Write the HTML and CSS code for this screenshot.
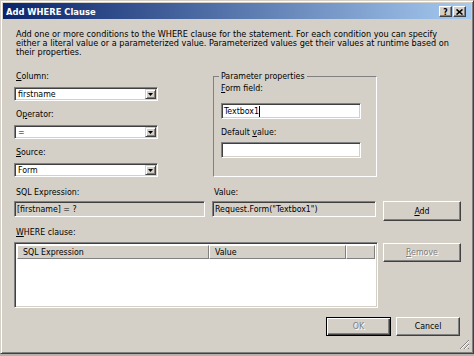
FILE: index.html
```html
<!DOCTYPE html>
<html>
<head>
<meta charset="utf-8">
<link rel="stylesheet" href="styles.css">
</head>
<body>
<div class="window">
  <div class="titlebar">
    <span class="title">Add WHERE Clause</span>
    <div class="caption-buttons">
      <span class="cap-btn help">?</span>
      <span class="cap-btn close"><svg width="7" height="6" viewBox="0 0 7 6"><path d="M0.5 0.5 L6.5 5.5 M6.5 0.5 L0.5 5.5" stroke="#000" stroke-width="1.6" fill="none"/></svg></span>
    </div>
  </div>
  <div class="content">
    <p class="desc">Add one or more conditions to the WHERE clause for the statement. For each condition you can specify either a literal value or a parameterized value. Parameterized values get their values at runtime based on their properties.</p>
    <div class="main">
      <div class="left">
        <label class="lbl"><u>C</u>olumn:</label>
        <div class="combo"><span class="combo-text">firstname</span><span class="combo-btn"><svg width="5" height="3" viewBox="0 0 5 3"><path d="M0 0 H5 L2.5 3 Z" fill="#000"/></svg></span></div>
        <label class="lbl gap"><span>O</span><u>p</u>erator:</label>
        <div class="combo"><span class="combo-text">=</span><span class="combo-btn"><svg width="5" height="3" viewBox="0 0 5 3"><path d="M0 0 H5 L2.5 3 Z" fill="#000"/></svg></span></div>
        <label class="lbl gap"><u>S</u>ource:</label>
        <div class="combo"><span class="combo-text">Form</span><span class="combo-btn"><svg width="5" height="3" viewBox="0 0 5 3"><path d="M0 0 H5 L2.5 3 Z" fill="#000"/></svg></span></div>
      </div>
      <fieldset class="group">
        <legend>Parameter properties</legend>
        <label class="lbl"><u>F</u>orm field:</label>
        <div class="textbox first">Textbox1<span class="caret"></span></div>
        <label class="lbl gap2">Default <u>v</u>alue:</label>
        <div class="textbox second"></div>
      </fieldset>
    </div>
    <div class="expr">
      <label class="lbl">SQL Expression:</label>
      <label class="lbl">Value:</label>
      <span></span>
      <div class="field">[firstname] = ?</div>
      <div class="field">Request.Form("Textbox1")</div>
      <button class="btn"><u>A</u>dd</button>
    </div>
    <label class="lbl where-lbl"><u>W</u>HERE clause:</label>
    <div class="where">
      <div class="listview">
        <div class="lv-header">
          <span class="lv-col c1">SQL Expression</span>
          <span class="lv-col c2">Value</span>
          <span class="lv-col c3"></span>
        </div>
      </div>
      <button class="btn remove" disabled><u>R</u>emove</button>
    </div>
    <div class="footer">
      <button class="btn ok" disabled>OK</button>
      <button class="btn">Cancel</button>
    </div>
  </div>
  <svg class="grip" width="11" height="11" viewBox="0 0 11 11">
    <path d="M10 1 L1 10 M10 5 L5 10 M10 9 L9 10" stroke="#808080" stroke-width="1" fill="none"/>
    <path d="M10 2 L2 10 M10 6 L6 10" stroke="#fff" stroke-width="1" fill="none"/>
  </svg>
</div>
</body>
</html>
```
FILE: styles.css
```css
body {
  margin: 0;
  background: #b5b2aa;
  font-family: "DejaVu Sans Condensed", "DejaVu Sans", sans-serif;
  font-stretch: condensed;
  font-size: 8.75px;
  line-height: 9px;
  color: #000;
}

.window {
  position: relative;
  width: 474px;
  height: 354px;
  box-sizing: border-box;
  border: 1px solid;
  border-color: #d4d0c8 #404040 #404040 #d4d0c8;
  box-shadow: inset 1px 1px #fff, inset -1px -1px #808080;
  padding: 2px;
  background: #d4d0c8;
  display: flex;
  flex-direction: column;
}

.titlebar {
  height: 16px;
  flex: none;
  background: linear-gradient(90deg, #0a246a, #a6caf0);
  display: flex;
  align-items: center;
  justify-content: space-between;
  padding: 0 5px 0 3px;
}

.title {
  color: #fff;
  font-weight: bold;
  font-size: 9.3px;
}

.caption-buttons {
  display: flex;
  gap: 1px;
  padding-top: 1px;
}

.cap-btn {
  width: 13px;
  height: 11px;
  box-sizing: border-box;
  background: #d4d0c8;
  border: 1px solid;
  border-color: #fff #404040 #404040 #fff;
  box-shadow: inset -1px -1px #808080;
  display: flex;
  align-items: center;
  justify-content: center;
  font-weight: bold;
  font-size: 8.5px;
  line-height: 8px;
}

.content {
  flex: 1;
  padding: 0 10px 0 11px;
  display: flex;
  flex-direction: column;
}

.desc {
  margin: 11px 0 0 2px;
  width: 434px;
  font-size: 9.05px;
}

.lbl {
  display: block;
  height: 9px;
  padding-left: 2px;
  white-space: nowrap;
}

.main {
  display: grid;
  grid-template-columns: 144px 164px;
  column-gap: 55px;
  margin-top: 15px;
}

.left {
  display: flex;
  flex-direction: column;
}

.left .lbl.gap {
  margin-top: 9px;
}

.combo {
  margin-top: 6px;
  height: 14px;
  box-sizing: border-box;
  background: #fff;
  border: 1px solid;
  border-color: #808080 #fff #fff #808080;
  box-shadow: inset 1px 1px #404040, inset -1px -1px #d4d0c8;
  padding: 2px;
  display: flex;
  align-items: center;
  justify-content: space-between;
}

.combo-text {
  padding-left: 1px;
}

.combo-btn {
  width: 11px;
  height: 10px;
  margin: -1px -1px -1px 0;
  box-sizing: border-box;
  background: #d4d0c8;
  border: 1px solid;
  border-color: #d4d0c8 #404040 #404040 #d4d0c8;
  box-shadow: inset 1px 1px #fff, inset -1px -1px #808080;
  display: flex;
  align-items: center;
  justify-content: center;
}

.group {
  margin: 0;
  height: 105px;
  box-sizing: border-box;
  padding: 3px 7px 0 7px;
  border: 1px solid #808080;
  border-right-color: #fff;
  border-bottom-color: #fff;
  min-width: 0;
}

.group legend {
  padding: 0 2px;
  margin-left: -2px;
  line-height: 9px;
}

.group .lbl {
  padding-left: 0;
}

.group .lbl.gap2 {
  margin-top: 9px;
}

.textbox {
  width: 140px;
  height: 16px;
  box-sizing: border-box;
  background: #fff;
  border: 1px solid;
  border-color: #808080 #fff #fff #808080;
  box-shadow: inset 1px 1px #404040, inset -1px -1px #d4d0c8;
  padding: 3px 2px 0 2px;
  display: flex;
  align-items: flex-start;
}

.textbox.first {
  margin-top: 10px;
}

.textbox.second {
  margin-top: 5px;
}

.caret {
  display: inline-block;
  width: 1px;
  height: 11px;
  margin-top: -1px;
  background: #000;
}

.expr {
  display: grid;
  grid-template-columns: 191px 164px 78px;
  column-gap: 7px;
  row-gap: 4px;
  margin-top: 11px;
  align-items: start;
}

.field {
  height: 16px;
  box-sizing: border-box;
  border: 1px solid;
  border-color: #808080 #fff #fff #808080;
  box-shadow: inset 1px 1px #404040, inset -1px -1px #d4d0c8;
  padding: 3px 2px 0 2px;
  white-space: nowrap;
  overflow: hidden;
}

.btn {
  font: inherit;
  font-stretch: condensed;
  color: #000;
  height: 20px;
  padding: 0;
  box-sizing: border-box;
  background: #d4d0c8;
  border: 1px solid;
  border-color: #fff #404040 #404040 #fff;
  box-shadow: inset -1px -1px #808080;
  text-align: center;
}

.btn:disabled {
  color: #808080;
  text-shadow: 1px 1px #fff;
}

.where-lbl {
  margin-top: 7px;
}

.where {
  display: grid;
  grid-template-columns: 364px 78px;
  column-gap: 5px;
  margin-top: 5px;
  align-items: start;
}

.listview {
  height: 66px;
  box-sizing: border-box;
  background: #fff;
  border: 1px solid;
  border-color: #808080 #fff #fff #808080;
  box-shadow: inset 1px 1px #404040, inset -1px -1px #d4d0c8;
  padding: 2px;
}

.lv-header {
  display: flex;
  height: 14px;
}

.lv-col {
  box-sizing: border-box;
  height: 14px;
  background: #d4d0c8;
  border: 1px solid;
  border-color: #fff #808080 #808080 #fff;
  padding: 2px 0 0 5px;
  white-space: nowrap;
}

.lv-col.c1 {
  width: 192px;
}

.lv-col.c2 {
  width: 137px;
}

.lv-col.c3 {
  flex: 1;
}

.remove {
  margin-top: 1px;
  height: 19px;
}

.footer {
  display: flex;
  justify-content: flex-end;
  gap: 5px;
  margin-top: 9px;
  margin-right: 1px;
}

.footer .btn {
  height: 19px;
  width: 64px;
}

.footer .ok {
  width: 65px;
  border-color: #000;
  box-shadow: inset 1px 1px #fff, inset -1px -1px #404040, inset -2px -2px #808080;
}

.grip {
  position: absolute;
  right: 3px;
  bottom: 3px;
}
```
